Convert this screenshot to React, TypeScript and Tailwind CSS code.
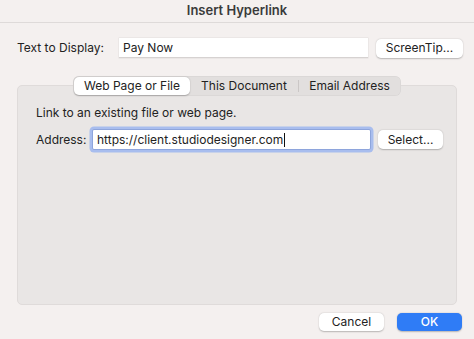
export default function App() {
  return (
    <div
      className="w-[474px] h-[339px] bg-[#f4f0ef] text-[12px] text-[#222] overflow-hidden"
      style={{ fontFamily: 'Inter, "Liberation Sans", sans-serif' }}
    >
      {/* title bar */}
      <div className="h-[23px] border-b border-[#dedad9] flex items-center justify-center text-[13px] font-semibold text-[#3a3a3a]">
        Insert Hyperlink
      </div>

      {/* text to display */}
      <div className="flex items-center mt-[15px] pl-[17px]">
        <span className="w-[102px]">Text to Display:</span>
        <div className="w-[249px] h-[20px] bg-white border-b border-[#d6d2d1] shadow-[0_0_0_0.5px_#e2dedd] flex items-center pl-[4px]">
          Pay Now
        </div>
        <button className="ml-[8px] w-[87px] h-[19px] bg-white rounded-[5px] shadow-[0_0.5px_1.5px_rgba(0,0,0,0.25)] flex items-center justify-center">
          ScreenTip...
        </button>
      </div>

      {/* tabs + panel */}
      <div className="mt-[18px] px-[17px]">
        <div className="relative z-10 mx-auto w-[328px] h-[20px] bg-[#e2dfde] rounded-[6px] flex items-center p-[1px] shadow-[inset_0_0_0_0.5px_rgba(0,0,0,0.06)]">
          <div className="w-[116px] h-[18px] bg-white rounded-[5px] shadow-[0_0.5px_1.5px_rgba(0,0,0,0.25)] flex items-center justify-center">
            Web Page or File
          </div>
          <div className="w-[108px] h-[18px] flex items-center justify-center">This Document</div>
          <div className="w-px h-[12px] bg-[#cbc7c6]" />
          <div className="flex-1 h-[18px] flex items-center justify-center">Email Address</div>
        </div>
        <div className="-mt-[11px] h-[220px] bg-[#e9e6e5] rounded-[5px] border border-[#dfdbda] pt-[19px] pl-[18px]">
          <div className="h-[16px] flex items-center">Link to an existing file or web page.</div>
          <div className="flex items-center mt-[8px]">
            <span className="w-[56px]">Address:</span>
            <div className="w-[279px] h-[21px] bg-white border border-[#8ea5dc] rounded-[2px] shadow-[0_0_0_2.5px_#a8bdee] flex items-center pl-[4px]">
              https://client.studiodesigner.com
              <span className="w-px h-[14px] bg-[#111] ml-px" />
            </div>
            <button className="ml-[7px] w-[65px] h-[19px] bg-white rounded-[5px] shadow-[0_0.5px_1.5px_rgba(0,0,0,0.25)] flex items-center justify-center">
              Select...
            </button>
          </div>
        </div>
      </div>

      {/* footer buttons */}
      <div className="flex justify-end gap-[13px] pr-[12px] mt-[8px]">
        <button className="w-[65px] h-[18px] bg-white rounded-[5px] shadow-[0_0.5px_1.5px_rgba(0,0,0,0.25)] flex items-center justify-center">
          Cancel
        </button>
        <button className="w-[65px] h-[18px] bg-[#2f7cf6] text-white font-medium rounded-[5px] shadow-[0_0.5px_1.5px_rgba(0,0,0,0.25)] flex items-center justify-center">
          OK
        </button>
      </div>
    </div>
  )
}
